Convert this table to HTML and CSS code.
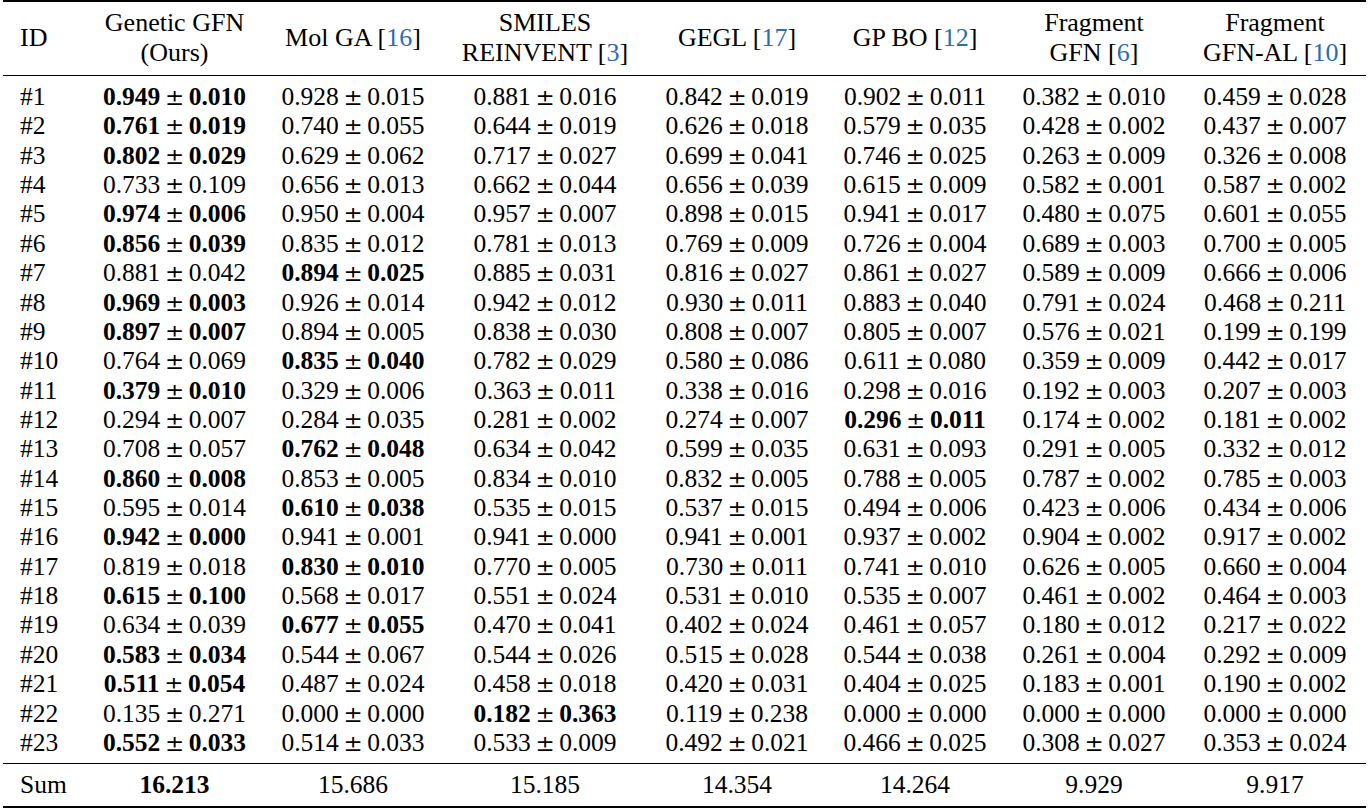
FILE: index.html
```html
<!DOCTYPE html>
<html lang="en">
<head>
<meta charset="utf-8">
<title>Results table</title>
<link rel="stylesheet" href="styles.css">
</head>
<body>
<table class="results">
  <colgroup>
    <col class="c-id"><col class="c-ggfn"><col class="c-molga"><col class="c-smiles"><col class="c-gegl"><col class="c-gpbo"><col class="c-frag"><col class="c-fragal">
  </colgroup>
  <thead>
    <tr>
      <th class="id">ID</th>
      <th>Genetic GFN<br>(Ours)</th>
      <th>Mol GA [<span class="cite">16</span>]</th>
      <th>SMILES<br>REINVENT [<span class="cite">3</span>]</th>
      <th>GEGL [<span class="cite">17</span>]</th>
      <th>GP BO [<span class="cite">12</span>]</th>
      <th>Fragment<br>GFN [<span class="cite">6</span>]</th>
      <th>Fragment<br>GFN-AL [<span class="cite">10</span>]</th>
    </tr>
  </thead>
  <tbody>
    <tr class="first"><td class="id">#1</td><td><b>0.949</b><span class="pm">±</span><b>0.010</b></td><td>0.928<span class="pm">±</span>0.015</td><td>0.881<span class="pm">±</span>0.016</td><td>0.842<span class="pm">±</span>0.019</td><td>0.902<span class="pm">±</span>0.011</td><td>0.382<span class="pm">±</span>0.010</td><td>0.459<span class="pm">±</span>0.028</td></tr>
    <tr><td class="id">#2</td><td><b>0.761</b><span class="pm">±</span><b>0.019</b></td><td>0.740<span class="pm">±</span>0.055</td><td>0.644<span class="pm">±</span>0.019</td><td>0.626<span class="pm">±</span>0.018</td><td>0.579<span class="pm">±</span>0.035</td><td>0.428<span class="pm">±</span>0.002</td><td>0.437<span class="pm">±</span>0.007</td></tr>
    <tr><td class="id">#3</td><td><b>0.802</b><span class="pm">±</span><b>0.029</b></td><td>0.629<span class="pm">±</span>0.062</td><td>0.717<span class="pm">±</span>0.027</td><td>0.699<span class="pm">±</span>0.041</td><td>0.746<span class="pm">±</span>0.025</td><td>0.263<span class="pm">±</span>0.009</td><td>0.326<span class="pm">±</span>0.008</td></tr>
    <tr><td class="id">#4</td><td>0.733<span class="pm">±</span>0.109</td><td>0.656<span class="pm">±</span>0.013</td><td>0.662<span class="pm">±</span>0.044</td><td>0.656<span class="pm">±</span>0.039</td><td>0.615<span class="pm">±</span>0.009</td><td>0.582<span class="pm">±</span>0.001</td><td>0.587<span class="pm">±</span>0.002</td></tr>
    <tr><td class="id">#5</td><td><b>0.974</b><span class="pm">±</span><b>0.006</b></td><td>0.950<span class="pm">±</span>0.004</td><td>0.957<span class="pm">±</span>0.007</td><td>0.898<span class="pm">±</span>0.015</td><td>0.941<span class="pm">±</span>0.017</td><td>0.480<span class="pm">±</span>0.075</td><td>0.601<span class="pm">±</span>0.055</td></tr>
    <tr><td class="id">#6</td><td><b>0.856</b><span class="pm">±</span><b>0.039</b></td><td>0.835<span class="pm">±</span>0.012</td><td>0.781<span class="pm">±</span>0.013</td><td>0.769<span class="pm">±</span>0.009</td><td>0.726<span class="pm">±</span>0.004</td><td>0.689<span class="pm">±</span>0.003</td><td>0.700<span class="pm">±</span>0.005</td></tr>
    <tr><td class="id">#7</td><td>0.881<span class="pm">±</span>0.042</td><td><b>0.894</b><span class="pm">±</span><b>0.025</b></td><td>0.885<span class="pm">±</span>0.031</td><td>0.816<span class="pm">±</span>0.027</td><td>0.861<span class="pm">±</span>0.027</td><td>0.589<span class="pm">±</span>0.009</td><td>0.666<span class="pm">±</span>0.006</td></tr>
    <tr><td class="id">#8</td><td><b>0.969</b><span class="pm">±</span><b>0.003</b></td><td>0.926<span class="pm">±</span>0.014</td><td>0.942<span class="pm">±</span>0.012</td><td>0.930<span class="pm">±</span>0.011</td><td>0.883<span class="pm">±</span>0.040</td><td>0.791<span class="pm">±</span>0.024</td><td>0.468<span class="pm">±</span>0.211</td></tr>
    <tr><td class="id">#9</td><td><b>0.897</b><span class="pm">±</span><b>0.007</b></td><td>0.894<span class="pm">±</span>0.005</td><td>0.838<span class="pm">±</span>0.030</td><td>0.808<span class="pm">±</span>0.007</td><td>0.805<span class="pm">±</span>0.007</td><td>0.576<span class="pm">±</span>0.021</td><td>0.199<span class="pm">±</span>0.199</td></tr>
    <tr><td class="id">#10</td><td>0.764<span class="pm">±</span>0.069</td><td><b>0.835</b><span class="pm">±</span><b>0.040</b></td><td>0.782<span class="pm">±</span>0.029</td><td>0.580<span class="pm">±</span>0.086</td><td>0.611<span class="pm">±</span>0.080</td><td>0.359<span class="pm">±</span>0.009</td><td>0.442<span class="pm">±</span>0.017</td></tr>
    <tr><td class="id">#11</td><td><b>0.379</b><span class="pm">±</span><b>0.010</b></td><td>0.329<span class="pm">±</span>0.006</td><td>0.363<span class="pm">±</span>0.011</td><td>0.338<span class="pm">±</span>0.016</td><td>0.298<span class="pm">±</span>0.016</td><td>0.192<span class="pm">±</span>0.003</td><td>0.207<span class="pm">±</span>0.003</td></tr>
    <tr><td class="id">#12</td><td>0.294<span class="pm">±</span>0.007</td><td>0.284<span class="pm">±</span>0.035</td><td>0.281<span class="pm">±</span>0.002</td><td>0.274<span class="pm">±</span>0.007</td><td><b>0.296</b><span class="pm">±</span><b>0.011</b></td><td>0.174<span class="pm">±</span>0.002</td><td>0.181<span class="pm">±</span>0.002</td></tr>
    <tr><td class="id">#13</td><td>0.708<span class="pm">±</span>0.057</td><td><b>0.762</b><span class="pm">±</span><b>0.048</b></td><td>0.634<span class="pm">±</span>0.042</td><td>0.599<span class="pm">±</span>0.035</td><td>0.631<span class="pm">±</span>0.093</td><td>0.291<span class="pm">±</span>0.005</td><td>0.332<span class="pm">±</span>0.012</td></tr>
    <tr><td class="id">#14</td><td><b>0.860</b><span class="pm">±</span><b>0.008</b></td><td>0.853<span class="pm">±</span>0.005</td><td>0.834<span class="pm">±</span>0.010</td><td>0.832<span class="pm">±</span>0.005</td><td>0.788<span class="pm">±</span>0.005</td><td>0.787<span class="pm">±</span>0.002</td><td>0.785<span class="pm">±</span>0.003</td></tr>
    <tr><td class="id">#15</td><td>0.595<span class="pm">±</span>0.014</td><td><b>0.610</b><span class="pm">±</span><b>0.038</b></td><td>0.535<span class="pm">±</span>0.015</td><td>0.537<span class="pm">±</span>0.015</td><td>0.494<span class="pm">±</span>0.006</td><td>0.423<span class="pm">±</span>0.006</td><td>0.434<span class="pm">±</span>0.006</td></tr>
    <tr><td class="id">#16</td><td><b>0.942</b><span class="pm">±</span><b>0.000</b></td><td>0.941<span class="pm">±</span>0.001</td><td>0.941<span class="pm">±</span>0.000</td><td>0.941<span class="pm">±</span>0.001</td><td>0.937<span class="pm">±</span>0.002</td><td>0.904<span class="pm">±</span>0.002</td><td>0.917<span class="pm">±</span>0.002</td></tr>
    <tr><td class="id">#17</td><td>0.819<span class="pm">±</span>0.018</td><td><b>0.830</b><span class="pm">±</span><b>0.010</b></td><td>0.770<span class="pm">±</span>0.005</td><td>0.730<span class="pm">±</span>0.011</td><td>0.741<span class="pm">±</span>0.010</td><td>0.626<span class="pm">±</span>0.005</td><td>0.660<span class="pm">±</span>0.004</td></tr>
    <tr><td class="id">#18</td><td><b>0.615</b><span class="pm">±</span><b>0.100</b></td><td>0.568<span class="pm">±</span>0.017</td><td>0.551<span class="pm">±</span>0.024</td><td>0.531<span class="pm">±</span>0.010</td><td>0.535<span class="pm">±</span>0.007</td><td>0.461<span class="pm">±</span>0.002</td><td>0.464<span class="pm">±</span>0.003</td></tr>
    <tr><td class="id">#19</td><td>0.634<span class="pm">±</span>0.039</td><td><b>0.677</b><span class="pm">±</span><b>0.055</b></td><td>0.470<span class="pm">±</span>0.041</td><td>0.402<span class="pm">±</span>0.024</td><td>0.461<span class="pm">±</span>0.057</td><td>0.180<span class="pm">±</span>0.012</td><td>0.217<span class="pm">±</span>0.022</td></tr>
    <tr><td class="id">#20</td><td><b>0.583</b><span class="pm">±</span><b>0.034</b></td><td>0.544<span class="pm">±</span>0.067</td><td>0.544<span class="pm">±</span>0.026</td><td>0.515<span class="pm">±</span>0.028</td><td>0.544<span class="pm">±</span>0.038</td><td>0.261<span class="pm">±</span>0.004</td><td>0.292<span class="pm">±</span>0.009</td></tr>
    <tr><td class="id">#21</td><td><b>0.511</b><span class="pm">±</span><b>0.054</b></td><td>0.487<span class="pm">±</span>0.024</td><td>0.458<span class="pm">±</span>0.018</td><td>0.420<span class="pm">±</span>0.031</td><td>0.404<span class="pm">±</span>0.025</td><td>0.183<span class="pm">±</span>0.001</td><td>0.190<span class="pm">±</span>0.002</td></tr>
    <tr><td class="id">#22</td><td>0.135<span class="pm">±</span>0.271</td><td>0.000<span class="pm">±</span>0.000</td><td><b>0.182</b><span class="pm">±</span><b>0.363</b></td><td>0.119<span class="pm">±</span>0.238</td><td>0.000<span class="pm">±</span>0.000</td><td>0.000<span class="pm">±</span>0.000</td><td>0.000<span class="pm">±</span>0.000</td></tr>
    <tr class="last"><td class="id">#23</td><td><b>0.552</b><span class="pm">±</span><b>0.033</b></td><td>0.514<span class="pm">±</span>0.033</td><td>0.533<span class="pm">±</span>0.009</td><td>0.492<span class="pm">±</span>0.021</td><td>0.466<span class="pm">±</span>0.025</td><td>0.308<span class="pm">±</span>0.027</td><td>0.353<span class="pm">±</span>0.024</td></tr>
  </tbody>
  <tfoot>
    <tr class="sum"><td class="id">Sum</td><td><b>16.213</b></td><td>15.686</td><td>15.185</td><td>14.354</td><td>14.264</td><td>9.929</td><td>9.917</td></tr>
  </tfoot>
</table>
</body>
</html>
```

FILE: styles.css
```css
html, body {
  margin: 0;
  padding: 0;
  background: #ffffff;
}

.results {
  margin: 0 0 0 3px;
  width: 1363px;
  table-layout: fixed;
  border-collapse: collapse;
  font-family: "Liberation Serif", "Times New Roman", serif;
  font-size: 25.5px;
  color: #000000;
}

.c-id { width: 82px; }
.c-ggfn { width: 179px; }
.c-molga { width: 178px; }
.c-smiles { width: 206px; }
.c-gegl { width: 178px; }
.c-gpbo { width: 178px; }
.c-frag { width: 180px; }
.c-fragal { width: 182px; }

.results th,
.results td {
  padding: 0;
  text-align: center;
  white-space: nowrap;
  vertical-align: middle;
}

.results .id {
  text-align: left;
  padding-left: 17px;
}

.results thead th {
  font-weight: normal;
  font-size: 26px;
  line-height: 30px;
  padding-top: 6px;
  padding-bottom: 7px;
  border-top: 2px solid #000000;
  border-bottom: 1px solid #000000;
}

.results thead th.id {
  padding-left: 17px;
}

.results tbody td {
  line-height: 29.36px;
  height: 29.36px;
}

.results tbody tr.first td {
  padding-top: 6px;
}

.results tbody tr.last td {
  padding-bottom: 6px;
  border-bottom: 1px solid #000000;
}

.results tfoot td {
  line-height: 42px;
  height: 42px;
  border-bottom: 2px solid #000000;
}

.results b {
  font-weight: bold;
}

.pm {
  font-family: "DejaVu Serif", serif;
  font-size: 0.9em;
  line-height: 0;
  margin: 0 0.2em;
}

.cite {
  color: #2a6db0;
}
```
